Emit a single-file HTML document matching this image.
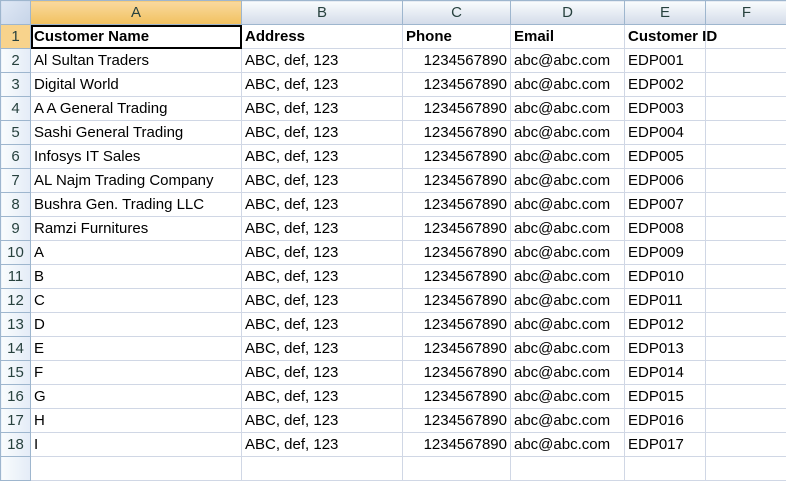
<!DOCTYPE html>
<html><head><style>
body{margin:0;width:786px;height:458px;overflow:hidden;background:#fff;font-family:"Liberation Sans",sans-serif;}
table{border-collapse:collapse;table-layout:fixed;position:absolute;left:0;top:0;width:787px;}
tr{height:24px}
td{height:24px;padding:0 0 0 3px;border:1px solid #d0d7e5;font-size:15px;color:#000;white-space:nowrap;overflow:hidden;box-sizing:border-box;}
tr.h td{background:linear-gradient(#f9fcfd,#d3dbe9);border-color:#9eb6ce;text-align:center;color:#27413e;padding:0}
td.r{background:linear-gradient(90deg,#f9fcfd,#e4ecf7);border-color:#9eb6ce;text-align:center;color:#27413e;padding:0}
td.sel{background:linear-gradient(#f9d99f,#f1c15f)!important;}
td.rs{background:#f8d38c!important}
td.num{text-align:right;padding-right:3px}
tr.b td:not(.r){font-weight:bold}
td.ov{overflow:visible}
.a1{outline:2px solid #000;outline-offset:-2px}
</style></head><body>
<table>
<colgroup><col style="width:30px"><col style="width:211px"><col style="width:161px"><col style="width:108px"><col style="width:114px"><col style="width:81px"><col style="width:82px"></colgroup>
<tr class="h"><td style="background:linear-gradient(135deg,#dfe8f5,#c6d4e8)"></td><td class="sel">A</td><td>B</td><td>C</td><td>D</td><td>E</td><td>F</td></tr>
<tr class="b"><td class="r rs">1</td><td class="a1">Customer Name</td><td>Address</td><td>Phone</td><td>Email</td><td class="ov">Customer ID</td><td></td></tr>
<tr><td class="r">2</td><td>Al Sultan Traders</td><td>ABC, def, 123</td><td class="num">1234567890</td><td>abc@abc.com</td><td>EDP001</td><td></td></tr>
<tr><td class="r">3</td><td>Digital World</td><td>ABC, def, 123</td><td class="num">1234567890</td><td>abc@abc.com</td><td>EDP002</td><td></td></tr>
<tr><td class="r">4</td><td>A A General Trading</td><td>ABC, def, 123</td><td class="num">1234567890</td><td>abc@abc.com</td><td>EDP003</td><td></td></tr>
<tr><td class="r">5</td><td>Sashi General Trading</td><td>ABC, def, 123</td><td class="num">1234567890</td><td>abc@abc.com</td><td>EDP004</td><td></td></tr>
<tr><td class="r">6</td><td>Infosys IT Sales</td><td>ABC, def, 123</td><td class="num">1234567890</td><td>abc@abc.com</td><td>EDP005</td><td></td></tr>
<tr><td class="r">7</td><td>AL Najm Trading Company</td><td>ABC, def, 123</td><td class="num">1234567890</td><td>abc@abc.com</td><td>EDP006</td><td></td></tr>
<tr><td class="r">8</td><td>Bushra Gen. Trading LLC</td><td>ABC, def, 123</td><td class="num">1234567890</td><td>abc@abc.com</td><td>EDP007</td><td></td></tr>
<tr><td class="r">9</td><td>Ramzi Furnitures</td><td>ABC, def, 123</td><td class="num">1234567890</td><td>abc@abc.com</td><td>EDP008</td><td></td></tr>
<tr><td class="r">10</td><td>A</td><td>ABC, def, 123</td><td class="num">1234567890</td><td>abc@abc.com</td><td>EDP009</td><td></td></tr>
<tr><td class="r">11</td><td>B</td><td>ABC, def, 123</td><td class="num">1234567890</td><td>abc@abc.com</td><td>EDP010</td><td></td></tr>
<tr><td class="r">12</td><td>C</td><td>ABC, def, 123</td><td class="num">1234567890</td><td>abc@abc.com</td><td>EDP011</td><td></td></tr>
<tr><td class="r">13</td><td>D</td><td>ABC, def, 123</td><td class="num">1234567890</td><td>abc@abc.com</td><td>EDP012</td><td></td></tr>
<tr><td class="r">14</td><td>E</td><td>ABC, def, 123</td><td class="num">1234567890</td><td>abc@abc.com</td><td>EDP013</td><td></td></tr>
<tr><td class="r">15</td><td>F</td><td>ABC, def, 123</td><td class="num">1234567890</td><td>abc@abc.com</td><td>EDP014</td><td></td></tr>
<tr><td class="r">16</td><td>G</td><td>ABC, def, 123</td><td class="num">1234567890</td><td>abc@abc.com</td><td>EDP015</td><td></td></tr>
<tr><td class="r">17</td><td>H</td><td>ABC, def, 123</td><td class="num">1234567890</td><td>abc@abc.com</td><td>EDP016</td><td></td></tr>
<tr><td class="r">18</td><td>I</td><td>ABC, def, 123</td><td class="num">1234567890</td><td>abc@abc.com</td><td>EDP017</td><td></td></tr>
<tr><td class="r"></td><td></td><td></td><td></td><td></td><td></td><td></td></tr>
</table>
</body></html>
